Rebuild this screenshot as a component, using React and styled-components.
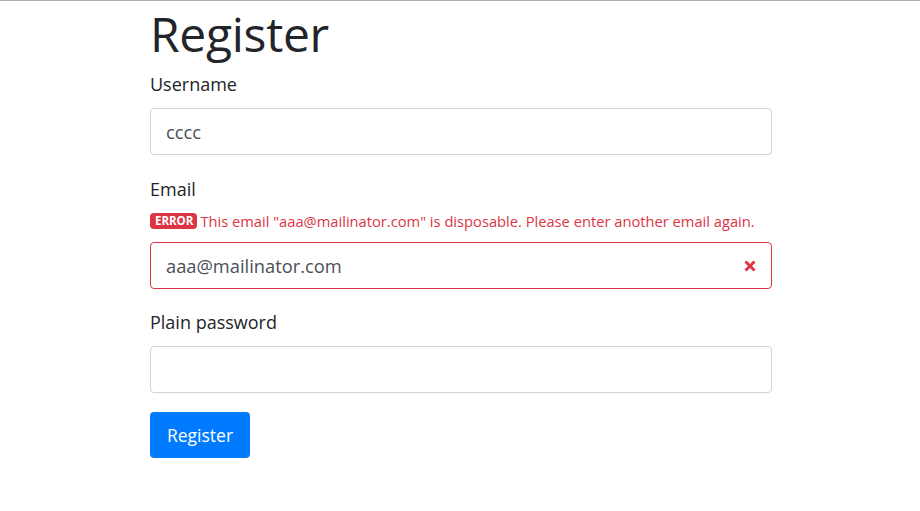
import React from 'react';
import styled, { createGlobalStyle } from 'styled-components';

const GlobalStyle = createGlobalStyle`
  html, body {
    margin: 0;
    background: #fff;
  }
  body {
    font-family: "Open Sans", "Noto Sans", sans-serif;
    color: #212529;
  }
  * { box-sizing: border-box; }
`;

const Page = styled.div`
  border-top: 1px solid #a7afaf;
  min-height: 511px;
  padding-left: 150px;
`;

const Form = styled.form`
  width: 622px;
  display: flex;
  flex-direction: column;
`;

const Title = styled.h1`
  margin: 0;
  font-size: 48px;
  font-weight: 500;
  line-height: 66px;
  letter-spacing: -0.3px;
`;

const Group = styled.div`
  display: flex;
  flex-direction: column;
  margin-top: ${(p) => p.$top || 0}px;
`;

const Label = styled.label`
  font-size: 18px;
  line-height: 27px;
  margin-bottom: 10px;
`;

const ErrorLine = styled.div`
  display: flex;
  align-items: center;
  gap: 3px;
  margin: -2px 0 11px;
  font-size: 14.7px;
  line-height: 20px;
  color: #dc3545;
`;

const Badge = styled.span`
  display: inline-flex;
  align-items: center;
  height: 16px;
  padding: 0 4px 0 5px;
  border-radius: 4px;
  background: #dc3545;
  color: #fff;
  font-size: 11.5px;
  font-weight: 700;
`;

const Field = styled.div`
  position: relative;
`;

const Input = styled.input`
  display: block;
  width: 100%;
  height: 47px;
  padding: 0 15px;
  border: 1px solid ${(p) => (p.$invalid ? '#dc3545' : '#ced4da')};
  border-radius: 4px;
  font-family: inherit;
  font-size: 18.3px;
  color: #495057;
  background: #fff;
  outline: none;
`;

const ClearIcon = styled.svg`
  position: absolute;
  right: 16px;
  top: 50%;
  transform: translateY(-50%);
  width: 12px;
  height: 12px;
`;

const Button = styled.button`
  align-self: flex-start;
  margin-top: 19px;
  width: 100px;
  height: 46px;
  border: 0;
  border-radius: 4px;
  background: #007bff;
  color: #fff;
  font-family: inherit;
  font-size: 17.5px;
  cursor: pointer;
`;

export default function App() {
  return (
    <>
      <GlobalStyle />
      <Page>
        <Form onSubmit={(e) => e.preventDefault()}>
          <Title>Register</Title>
          <Group $top={4}>
            <Label htmlFor="username">Username</Label>
            <Input id="username" defaultValue="cccc" />
          </Group>
          <Group $top={21}>
            <Label htmlFor="email">Email</Label>
            <ErrorLine>
              <Badge>ERROR</Badge>
              <span>This email "aaa@mailinator.com" is disposable. Please enter another email again.</span>
            </ErrorLine>
            <Field>
              <Input id="email" $invalid defaultValue="aaa@mailinator.com" />
              <ClearIcon viewBox="0 0 12 12" aria-hidden="true">
                <path d="M1.5 1.5 L10.5 10.5 M10.5 1.5 L1.5 10.5" stroke="#dc3545" strokeWidth="3" />
              </ClearIcon>
            </Field>
          </Group>
          <Group $top={20}>
            <Label htmlFor="password">Plain password</Label>
            <Input id="password" type="password" />
          </Group>
          <Button type="submit">Register</Button>
        </Form>
      </Page>
    </>
  );
}
